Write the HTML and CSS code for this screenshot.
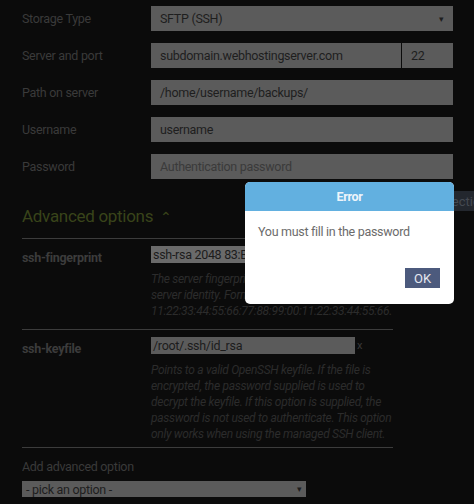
FILE: index.html
```html
<!DOCTYPE html>
<html lang="en">
<head>
  <meta charset="UTF-8" />
  <meta name="viewport" content="width=device-width, initial-scale=1.0"/>
  <title>Backup destination</title>
  <link rel="stylesheet" href="styles.css">
</head>
<body>

<div class="page">
  <div class="form-row">
    <label>Storage Type</label>
    <div class="field select">SFTP (SSH)<span class="arrow">&#9662;</span></div>
  </div>
  <div class="form-row">
    <label>Server and port</label>
    <div class="field-group">
      <div class="field server">subdomain.webhostingserver.com</div>
      <div class="field port">22</div>
    </div>
  </div>
  <div class="form-row">
    <label>Path on server</label>
    <div class="field">/home/username/backups/</div>
  </div>
  <div class="form-row">
    <label>Username</label>
    <div class="field">username</div>
  </div>
  <div class="form-row">
    <label>Password</label>
    <div class="field placeholder">Authentication password</div>
  </div>

  <div class="section-head">
    <h2>Advanced options <span class="chevron">&#8963;</span></h2>
    <button class="test-btn">Test connection</button>
  </div>

  <div class="advanced">
    <div class="opt-row">
      <div class="opt-label">ssh-fingerprint</div>
      <div class="opt-body">
        <div class="opt-input light">ssh-rsa 2048 83:B0:9A:4C:21:7E:55:D3:0F:6A:11:C8:2B:90:4E:77</div>
        <p class="help">The server fingerprint used for validation of server identity. Format is e.g. ssh-rsa 4096 11:22:33:44:55:66:77:88:99:00:11:22:33:44:55:66.</p>
      </div>
    </div>
    <div class="opt-row keyfile">
      <div class="opt-label">ssh-keyfile</div>
      <div class="opt-body">
        <div class="input-line">
          <div class="opt-input">/root/.ssh/id_rsa</div>
          <span class="remove">x</span>
        </div>
        <p class="help">Points to a valid OpenSSH keyfile. If the file is encrypted, the password supplied is used to decrypt the keyfile. If this option is supplied, the password is not used to authenticate. This option only works when using the managed SSH client.</p>
      </div>
    </div>
    <div class="add-option">
      <div class="add-label">Add advanced option</div>
      <div class="small-select">- pick an option -<span class="arrow">&#9662;</span></div>
    </div>
  </div>
</div>

<div class="dialog">
  <div class="dialog-head">Error</div>
  <div class="dialog-body">You must fill in the password</div>
  <div class="dialog-foot">
    <button class="ok-btn">OK</button>
  </div>
</div>

</body>
</html>
```

FILE: styles.css
```css
* {
  box-sizing: border-box;
  margin: 0;
  padding: 0;
}

body {
  background: #0b0b0b;
  width: 474px;
  height: 504px;
  overflow: hidden;
  position: relative;
  font-family: Roboto, "Noto Sans", sans-serif;
  font-size: 12.5px;
  letter-spacing: -0.3px;
}

.page {
  padding: 6px 0 0 22px;
}

.form-row {
  display: grid;
  grid-template-columns: 129px 302px;
  align-items: center;
  height: 25px;
  margin-bottom: 12px;
}

.form-row label {
  color: #3a3a3a;
}

.field {
  background: #5b5b5b;
  color: #1e1e1e;
  height: 25px;
  padding: 0 9px;
  display: flex;
  align-items: center;
}

.field.placeholder {
  color: #3a3a3a;
}

.select {
  justify-content: space-between;
}

.arrow {
  font-size: 9px;
  color: #1e1e1e;
}

.field-group {
  display: flex;
  gap: 1px;
}

.field.server {
  width: 250px;
}

.field.port {
  width: 51px;
}

.section-head {
  display: flex;
  align-items: flex-start;
  margin-top: 2px;
}

.section-head h2 {
  font-weight: normal;
  font-size: 17px;
  line-height: 30px;
  margin-top: 10px;
  color: #39441a;
}

.chevron {
  font-size: 14px;
  margin-left: 3px;
}

.test-btn {
  margin-left: auto;
  margin-right: -27px;
  width: 120px;
  height: 20px;
  border: none;
  background: #23272e;
  color: #454a52;
  font-family: inherit;
  font-size: 13px;
  text-align: left;
  padding-left: 14px;
}

.advanced {
  width: 371px;
  overflow: hidden;
  border-top: 1px solid #3c3c3c;
  margin-top: 6px;
}

.opt-row {
  display: grid;
  grid-template-columns: 129px 242px;
  padding: 7px 0 10px;
  border-bottom: 1px solid #3c3c3c;
}

.opt-row.keyfile {
  padding: 7px 0 5px;
}

.opt-label {
  color: #3c3c3c;
  font-weight: bold;
  padding-top: 4px;
}

.opt-input {
  background: #5b5b5b;
  color: #1c1c1c;
  height: 17px;
  width: 204px;
  padding: 0 2px;
  line-height: 17px;
  white-space: nowrap;
  overflow: hidden;
}

.opt-input.light {
  background: #6a6a6a;
  width: 250px;
}

.input-line {
  display: flex;
  align-items: center;
}

.remove {
  color: #3a3a3a;
  font-size: 11px;
  margin-left: 2px;
}

.help {
  color: #2c2c2c;
  font-size: 12px;
  font-style: italic;
  line-height: 16px;
  margin-top: 8px;
}

.add-option {
  padding-top: 11px;
}

.add-label {
  color: #3a3a3a;
  line-height: 16px;
}

.small-select {
  margin-top: 6px;
  width: 284px;
  height: 16px;
  background: #5b5b5b;
  color: #1e1e1e;
  padding: 0 4px;
  display: flex;
  justify-content: space-between;
  align-items: center;
}

.dialog {
  position: absolute;
  left: 245px;
  top: 182px;
  width: 209px;
  height: 122px;
  background: #fff;
  border-radius: 5px;
  overflow: hidden;
  display: flex;
  flex-direction: column;
}

.dialog-head {
  background: #62b0e0;
  color: #eef5fb;
  height: 29px;
  line-height: 29px;
  text-align: center;
  font-weight: bold;
}

.dialog-body {
  color: #6b6b6b;
  padding: 13px 13px 0;
  line-height: 16px;
  flex: 1;
}

.dialog-foot {
  display: flex;
  justify-content: flex-end;
  padding: 0 14px 16px;
}

.ok-btn {
  width: 35px;
  height: 20px;
  border: none;
  background: #4c5a7d;
  color: #e4e8f0;
  font-family: inherit;
  font-size: 13px;
}
```
